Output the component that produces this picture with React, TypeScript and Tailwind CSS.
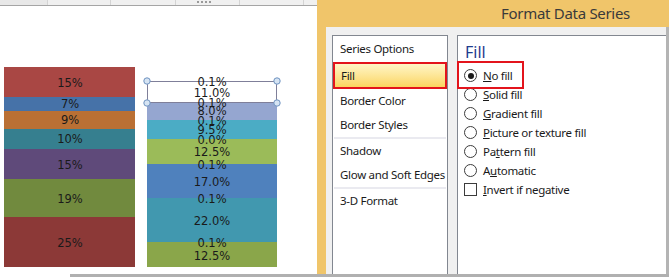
import React from "react";

const leftSegs = [
  { y0: 67, y1: 97, c: "#A94744", t: "15%", ty: 83 },
  { y0: 97, y1: 111, c: "#4672A8", t: "7%", ty: 104 },
  { y0: 111, y1: 129, c: "#BA7034", t: "9%", ty: 120 },
  { y0: 129, y1: 149, c: "#367F8F", t: "10%", ty: 139 },
  { y0: 149, y1: 179, c: "#5F4A7A", t: "15%", ty: 165 },
  { y0: 179, y1: 217, c: "#718A3E", t: "19%", ty: 199 },
  { y0: 217, y1: 267, c: "#8C3937", t: "25%", ty: 243 },
];

const rightSegs = [
  { y0: 103, y1: 120, c: "#95A6D0" },
  { y0: 120, y1: 139, c: "#4BACC5" },
  { y0: 139, y1: 164, c: "#9BBB59" },
  { y0: 164, y1: 198, c: "#4F81BD" },
  { y0: 198, y1: 242, c: "#4198AF" },
  { y0: 242, y1: 267, c: "#8AA64A" },
];

const rightLabels: [string, number][] = [
  ["0.1%", 82],
  ["11.0%", 93],
  ["0.1%", 103],
  ["8.0%", 111],
  ["0.1%", 121],
  ["9.5%", 130],
  ["0.0%", 140],
  ["12.5%", 152],
  ["0.1%", 165],
  ["17.0%", 182],
  ["0.1%", 199],
  ["22.0%", 221],
  ["0.1%", 243],
  ["12.5%", 256],
];

function Chart() {
  const font = "'DejaVu Sans', Verdana, sans-serif";
  return (
    <svg width="317" height="268" viewBox="0 6 317 268" className="block">
      <rect x="0" y="6" width="317" height="268" fill="#fff" />
      {leftSegs.map((s, i) => (
        <rect key={i} x="4" y={s.y0} width="131" height={s.y1 - s.y0} fill={s.c} />
      ))}
      {leftSegs.map((s, i) => (
        <text
          key={i}
          x="70"
          y={s.ty}
          textAnchor="middle"
          dominantBaseline="central"
          fontFamily={font}
          fontSize="11.5"
          fill="#1a1a1a"
        >
          {s.t}
        </text>
      ))}
      {rightSegs.map((s, i) => (
        <rect key={i} x="147" y={s.y0} width="130" height={s.y1 - s.y0} fill={s.c} />
      ))}
      <rect x="147.5" y="81.5" width="129" height="21" fill="#fff" stroke="#7F7F99" strokeWidth="1" />
      {rightLabels.map(([t, y], i) => (
        <text
          key={i}
          x="212"
          y={y}
          textAnchor="middle"
          dominantBaseline="central"
          fontFamily={font}
          fontSize="11.5"
          fill="#1a1a1a"
        >
          {t}
        </text>
      ))}
      {[
        [147, 81],
        [277, 81],
        [147, 103],
        [277, 103],
      ].map(([x, y], i) => (
        <circle key={i} cx={x} cy={y} r="3.2" fill="#D6E4F3" stroke="#6F93C1" strokeWidth="1" />
      ))}
    </svg>
  );
}

function Radio({ checked }: { checked?: boolean }) {
  return (
    <span className="w-[13px] h-[13px] rounded-full border border-[#3c3c3c] bg-white flex items-center justify-center shrink-0">
      {checked && <span className="w-[6px] h-[6px] rounded-full bg-[#1a1a1a]" />}
    </span>
  );
}

function Option({
  children,
  checked,
  box,
}: {
  children: React.ReactNode;
  checked?: boolean;
  box?: boolean;
}) {
  return (
    <div className="h-[19px] flex items-center gap-[6px] pl-[5px]">
      {box ? (
        <span className="w-[13px] h-[13px] border border-[#3c3c3c] bg-white shrink-0" />
      ) : (
        <Radio checked={checked} />
      )}
      <span className="text-[11.5px] tracking-[-0.3px] text-[#1a1a1a] leading-none whitespace-nowrap">
        {children}
      </span>
    </div>
  );
}

function ListItem({ children, h = 24 }: { children: React.ReactNode; h?: number }) {
  return (
    <div
      className="flex items-center pl-[7px] text-[11.5px] tracking-[-0.3px] text-[#1a1a1a] whitespace-nowrap"
      style={{ height: h }}
    >
      {children}
    </div>
  );
}

export default function App() {
  return (
    <div
      className="w-[669px] h-[277px] flex flex-col bg-white overflow-hidden"
      style={{ fontFamily: "'Noto Sans', 'Open Sans', sans-serif" }}
    >
      <div className="flex h-[274px]">
        {/* Excel area */}
        <div className="w-[317px] flex flex-col">
          <div className="h-[6px] flex bg-[#F0F0F0] border-b border-[#A5A5A5]">
            <div className="w-[48px] border-r border-[#D4D4D4] bg-[#E8E8E8]" />
            <div className="w-[63px] border-r border-[#D4D4D4]" />
            <div className="w-[65px] border-r border-[#D4D4D4]" />
            <div className="w-[64px] border-r border-[#D4D4D4] flex items-start justify-center pt-[1px] pr-[8px]">
              <div className="flex gap-[2px]">
                <span className="w-[2px] h-[2px] bg-[#9a9a9a]" />
                <span className="w-[2px] h-[2px] bg-[#9a9a9a]" />
                <span className="w-[2px] h-[2px] bg-[#9a9a9a]" />
                <span className="w-[2px] h-[2px] bg-[#9a9a9a]" />
              </div>
            </div>
            <div className="w-[64px] border-r border-[#D4D4D4]" />
            <div className="flex-1" />
          </div>
          <Chart />
        </div>

        {/* Dialog */}
        <div className="flex-1 flex flex-col bg-[#F0C56A] pl-[9px]">
          <div className="h-[27px] shrink-0 flex items-center justify-end pr-[39px] text-[15px] tracking-[-0.3px] text-[#3a3a3a]">
            Format Data Series
          </div>
          <div className="flex-1 flex bg-[#F0F0F0] pl-[6px] pt-[8px] gap-[9px] border-r-[3px] border-[#B4B4B4]">
            <div className="w-[116px] shrink-0 bg-white border border-b-0 border-[#828790] flex flex-col">
              <ListItem h={26}>Series Options</ListItem>
              <div className="h-[27px] border-2 border-[#E3141C] flex items-center pl-[6px] text-[11.5px] tracking-[-0.3px] text-[#1a1a1a] bg-gradient-to-b from-[#FFF6C6] to-[#FBD55E]">
                Fill
              </div>
              <ListItem h={24}>Border Color</ListItem>
              <ListItem h={24}>Border Styles</ListItem>
              <div className="h-[2px] mx-[1px] bg-[#EAEAF0]" />
              <ListItem h={24}>Shadow</ListItem>
              <ListItem h={24}>Glow and Soft Edges</ListItem>
              <div className="h-[2px] mx-[1px] bg-[#EAEAF0]" />
              <ListItem h={24}>3-D Format</ListItem>
            </div>
            <div className="flex-1 bg-white border-l border-t border-[#828790] flex flex-col pl-[1px]">
              <div className="h-[30px] flex items-center pl-[6px] pt-[2px] text-[16px] text-[#1F3C8E]">
                Fill
              </div>
              <div className="relative">
                <Option checked>
                  <u>N</u>o fill
                </Option>
                <div className="absolute left-[-2px] top-[-5px] w-[67px] h-[28px] border-2 border-[#E3141C]" />
              </div>
              <Option>
                <u>S</u>olid fill
              </Option>
              <Option>
                <u>G</u>radient fill
              </Option>
              <Option>
                <u>P</u>icture or texture fill
              </Option>
              <Option>
                Pa<u>t</u>tern fill
              </Option>
              <Option>
                A<u>u</u>tomatic
              </Option>
              <Option box>
                <u>I</u>nvert if negative
              </Option>
            </div>
          </div>
        </div>
      </div>
      <div className="h-[3px] ml-[70px] bg-[#B0B0B0]" />
    </div>
  );
}
